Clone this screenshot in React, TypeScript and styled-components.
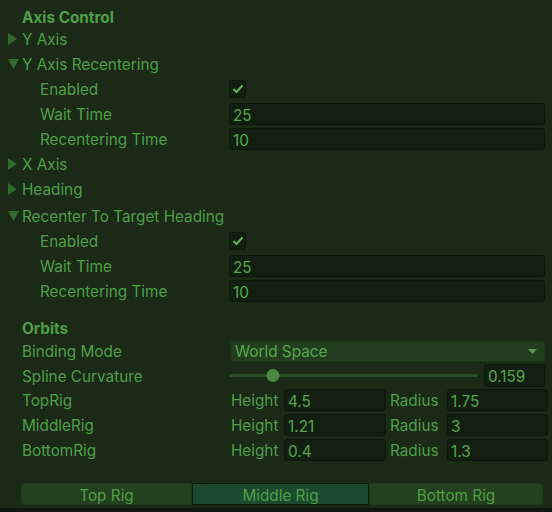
import React from "react";
import styled, { createGlobalStyle } from "styled-components";

const Global = createGlobalStyle`
  html, body { margin: 0; padding: 0; background: #1a2a17; }
  body { font-family: Inter, "Noto Sans", sans-serif; }
`;

const TEXT = "#4f9f47";
const VALUE = "#56a84d";
const FS = "15.3px";

const Page = styled.div`
  width: 552px;
  height: 512px;
  display: flex;
  flex-direction: column;
  background: #1a2a17;
  color: ${TEXT};
  font-size: ${FS};
  overflow: hidden;
`;

const Panel = styled.div`
  flex: 1;
  display: flex;
  flex-direction: column;
  padding-top: 6px;
`;

const Section = styled.div<{ $mt?: number }>`
  display: flex;
  flex-direction: column;
  gap: 3px;
  margin-top: ${(p) => p.$mt ?? 0}px;
`;

const Row = styled.div<{ $h?: number; $mt?: number }>`
  display: grid;
  grid-template-columns: 229px 1fr;
  align-items: center;
  height: ${(p) => p.$h ?? 22}px;
  margin-top: ${(p) => p.$mt ?? 0}px;
  padding-right: 7px;
`;

const Label = styled.div<{ $indent: number; $bold?: boolean }>`
  display: flex;
  align-items: flex-start;
  padding-left: ${(p) => p.$indent}px;
  font-weight: ${(p) => (p.$bold ? 700 : 400)};
  line-height: 24px;
  height: 22px;
  white-space: nowrap;
`;

const Arrow = styled.span`
  width: 14px;
  height: 22px;
  display: inline-flex;
  align-items: center;
`;

const Field = styled.div<{ $h?: number }>`
  height: ${(p) => p.$h ?? 22}px;
  box-sizing: border-box;
  background: #121e10;
  border: 1px solid #0c170b;
  border-radius: 3px;
  padding-left: 3px;
  line-height: ${(p) => (p.$h ?? 22) + 1}px;
  color: ${VALUE};
  font-size: ${FS};
  overflow: hidden;
`;

const Check = styled.div`
  width: 17px;
  height: 18px;
  box-sizing: border-box;
  background: #121e10;
  border: 1px solid #0c170b;
  border-radius: 3px;
  display: flex;
  align-items: center;
  justify-content: center;
`;

const Dropdown = styled.div`
  height: 21px;
  box-sizing: border-box;
  margin-left: 1px;
  background: #233e1f;
  border: 1px solid #1d331a;
  border-radius: 3px;
  display: flex;
  align-items: center;
  justify-content: space-between;
  padding: 1px 7px 0 4px;
  color: ${VALUE};
`;

const SliderLine = styled.div`
  display: grid;
  grid-template-columns: 1fr 61px;
  gap: 6px;
  align-items: center;
`;

const Track = styled.div`
  position: relative;
  height: 3px;
  background: #2b4a27;
  border-radius: 2px;
`;

const Knob = styled.div`
  position: absolute;
  top: -5px;
  width: 13px;
  height: 13px;
  border-radius: 50%;
  background: #4a8b43;
  transform: translateX(-50%);
`;

const RigRow = styled.div`
  display: grid;
  grid-template-columns: 229px 55px 102px 61px 101px;
  align-items: center;
  height: 22px;
`;

const SubLabel = styled.div<{ $pl: number }>`
  padding-left: ${(p) => p.$pl}px;
  line-height: 24px;
  height: 22px;
`;

const ButtonBar = styled.div`
  display: flex;
  margin: 22px 9px 0 21px;
  height: 22px;
`;

const TabButton = styled.div<{ $active?: boolean; $pos: "l" | "m" | "r" }>`
  flex: ${(p) => (p.$pos === "l" ? "0 0 171px" : p.$pos === "m" ? "0 0 177px" : "1")};
  box-sizing: border-box;
  display: flex;
  align-items: center;
  justify-content: center;
  padding-top: 2px;
  background: ${(p) => (p.$active ? "#1b4a2f" : "#24411f")};
  border: 1px solid ${(p) => (p.$active ? "#0c1a0c" : "#1f381c")};
  border-radius: ${(p) => (p.$pos === "l" ? "4px 0 0 4px" : p.$pos === "r" ? "0 4px 4px 0" : "0")};
  color: ${TEXT};
  font-size: ${FS};
`;

const BottomStrip = styled.div`
  height: 4px;
  background: #0f190d;
`;

const RightTri = () => (
  <svg width="9" height="12" viewBox="0 0 9 12">
    <path d="M0 0 L9 6 L0 12 Z" fill="#2f6b2b" />
  </svg>
);
const DownTri = () => (
  <svg width="11" height="10" viewBox="0 0 11 10">
    <path d="M0 0 L11 0 L5.5 10 Z" fill="#2f6b2b" />
  </svg>
);

const CheckMark = () => (
  <svg width="12" height="10" viewBox="0 0 12 10">
    <path d="M1.5 5 L4.5 8 L10.5 1.5" stroke="#5cb050" strokeWidth="2.2" fill="none" />
  </svg>
);

const Fold: React.FC<{ open?: boolean; children: React.ReactNode }> = ({ open, children }) => (
  <Row>
    <Label $indent={8}>
      <Arrow>{open ? <DownTri /> : <RightTri />}</Arrow>
      {children}
    </Label>
    <div />
  </Row>
);

const Recentering: React.FC = () => (
  <>
    <Row>
      <Label $indent={40}>Enabled</Label>
      <Check>
        <CheckMark />
      </Check>
    </Row>
    <Row>
      <Label $indent={40}>Wait Time</Label>
      <Field>25</Field>
    </Row>
    <Row>
      <Label $indent={40}>Recentering Time</Label>
      <Field>10</Field>
    </Row>
  </>
);

const rigs = [
  { name: "TopRig", h: "4.5", r: "1.75" },
  { name: "MiddleRig", h: "1.21", r: "3" },
  { name: "BottomRig", h: "0.4", r: "1.3" },
];

export default function App() {
  return (
    <Page>
      <Global />
      <Panel>
        <Section>
          <Row $h={19}>
            <Label $indent={22} $bold>
              Axis Control
            </Label>
          </Row>
          <Fold>Y Axis</Fold>
          <Fold open>Y Axis Recentering</Fold>
          <Recentering />
          <Fold>X Axis</Fold>
          <Fold>Heading</Fold>
        </Section>
        <Section $mt={5}>
          <Fold open>Recenter To Target Heading</Fold>
          <Recentering />
        </Section>
        <Section $mt={15}>
          <Row>
            <Label $indent={22} $bold>
              Orbits
            </Label>
          </Row>
          <Row $h={21} $mt={-2}>
            <Label $indent={22}>Binding Mode</Label>
            <Dropdown>
              World Space
              <svg width="9" height="5" viewBox="0 0 9 5">
                <path d="M0 0 L9 0 L4.5 5 Z" fill={TEXT} />
              </svg>
            </Dropdown>
          </Row>
          <Row $h={22}>
            <Label $indent={22}>Spline Curvature</Label>
            <SliderLine>
              <Track>
                <Knob style={{ left: `${0.175 * 100}%` }} />
              </Track>
              <Field $h={23}>0.159</Field>
            </SliderLine>
          </Row>
          {rigs.map((r) => (
            <RigRow key={r.name}>
              <Label $indent={22}>{r.name}</Label>
              <SubLabel $pl={2}>Height</SubLabel>
              <Field>{r.h}</Field>
              <SubLabel $pl={4}>Radius</SubLabel>
              <Field>{r.r}</Field>
            </RigRow>
          ))}
        </Section>
        <ButtonBar>
          <TabButton $pos="l">Top Rig</TabButton>
          <TabButton $pos="m" $active>
            Middle Rig
          </TabButton>
          <TabButton $pos="r">Bottom Rig</TabButton>
        </ButtonBar>
      </Panel>
      <BottomStrip />
    </Page>
  );
}
